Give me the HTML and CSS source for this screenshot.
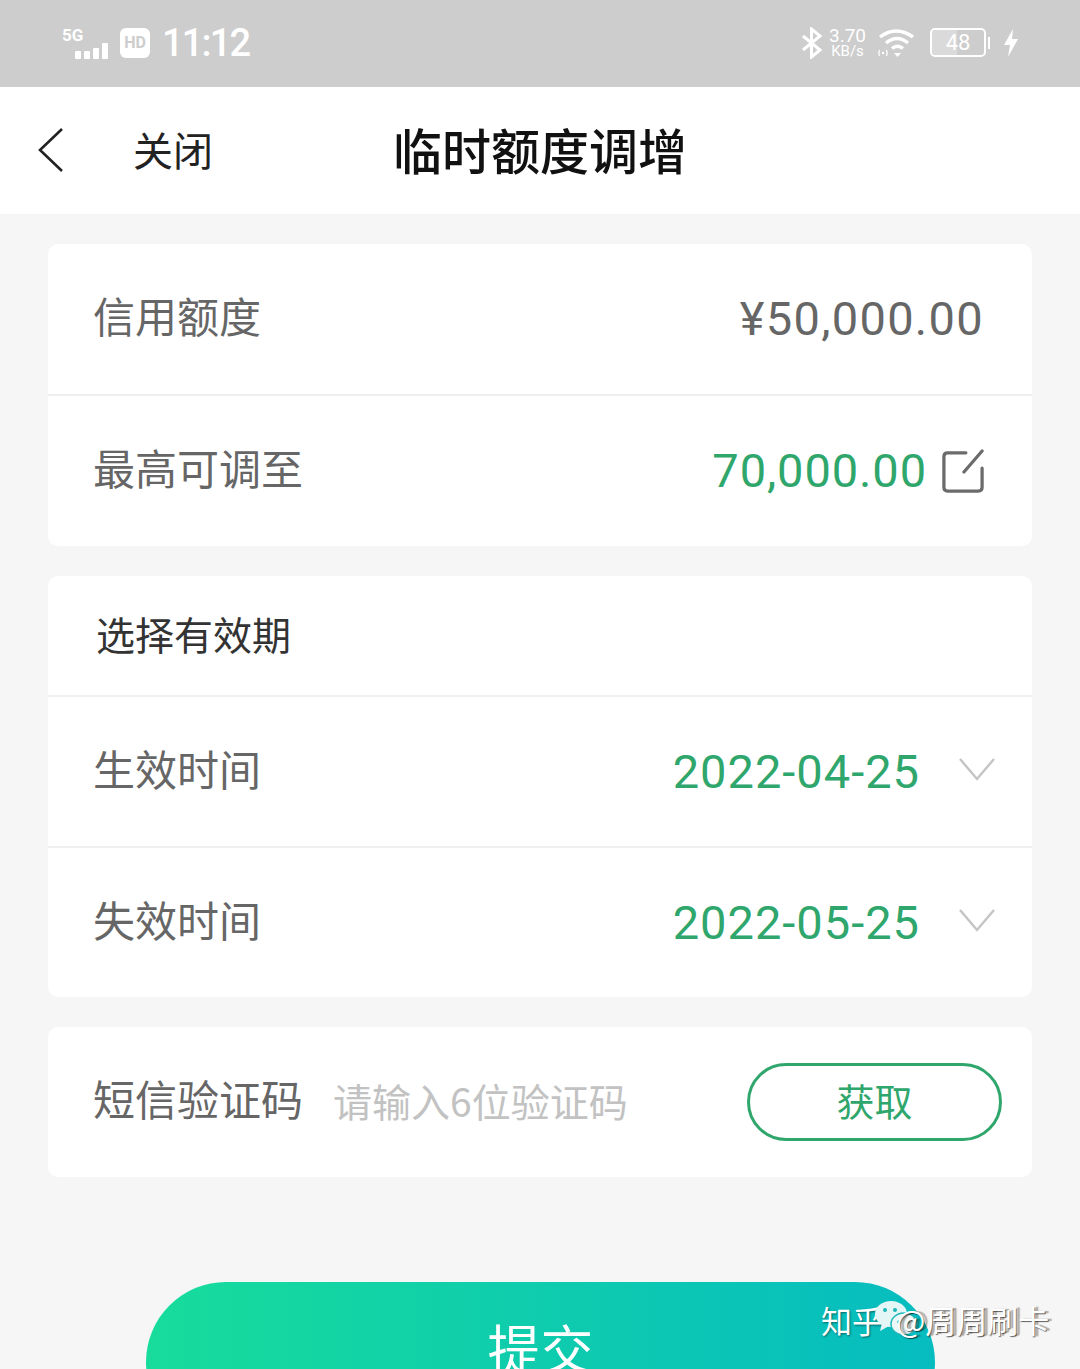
FILE: index.html
```html
<!DOCTYPE html>
<html lang="zh-CN">
<head>
    <meta charset="UTF-8">
    <meta name="viewport" content="width=device-width, initial-scale=1.0">
    <title>临时额度调增</title>
    <link rel="stylesheet" href="styles.css">
</head>
<body>
    <div class="status-bar">
        <div class="status-left">
            <div class="signal">
                <span class="signal-label">5G</span>
                <div class="signal-bars">
                    <i class="bar bar-1"></i><i class="bar bar-1"></i><i class="bar bar-2"></i><i class="bar bar-3"></i>
                </div>
            </div>
            <span class="hd-badge">HD</span>
            <span class="clock">11:12</span>
        </div>
        <div class="status-right">
            <svg class="bt-icon" width="22" height="32" viewBox="0 0 22 32" fill="none" stroke="#fff" stroke-width="3">
                <path d="M2 9 L19 23 L10.500 30 V2 L19 9 L2 23"/>
            </svg>
            <div class="net-speed">
                <span class="speed-num">3.70</span>
                <span class="speed-unit">KB/s</span>
            </div>
            <svg class="wifi-icon" width="38" height="30" viewBox="0 0 38 30" fill="none" stroke="#fff" stroke-width="3.400">
                <path d="M3 9 Q19 -3 36 9"/>
                <path d="M9 15 Q20 6 31 15"/>
                <path d="M15 20.500 Q20.500 16 26 20.500"/>
                <path d="M17 25 H24 L20.500 29 Z" fill="#fff" stroke="none"/>
                <circle cx="6" cy="25" r="1.300" fill="#fff" stroke="none"/>
                <path d="M2.500 22 Q1 25 2.500 28 M9.500 22 Q11 25 9.500 28" stroke-width="1.300"/>
            </svg>
            <div class="battery">
                <div class="battery-body">
                    <div class="battery-level"></div>
                    <span class="battery-num">48</span>
                </div>
                <i class="battery-cap"></i>
            </div>
            <svg class="bolt-icon" width="14" height="28" viewBox="0 0 14 28" fill="#fff">
                <path d="M9 0 L0 16 H6 L4 28 L14 10 H8 Z"/>
            </svg>
        </div>
    </div>

    <div class="nav-bar">
        <svg class="back-icon" width="26" height="46" viewBox="0 0 26 46" fill="none" stroke="#222" stroke-width="2.600">
            <path d="M24 2 L2 23 L24 44"/>
        </svg>
        <span class="nav-close">关闭</span>
        <h1 class="nav-title">临时额度调增</h1>
    </div>

    <div class="content">
        <div class="card">
            <div class="row">
                <span class="row-label">信用额度</span>
                <span class="amount amount-grey">¥50,000.00</span>
            </div>
            <div class="row row-tall">
                <span class="row-label">最高可调至</span>
                <div class="row-value">
                    <span class="amount amount-green">70,000.00</span>
                    <svg class="edit-icon" width="42" height="46" viewBox="0 0 44 46" fill="none" stroke="#6b6b6b" stroke-width="3.400" stroke-linecap="round">
                        <path d="M25 4 H6 Q2 4 2 8 V40 Q2 44 6 44 H38 Q42 44 42 40 V20"/>
                        <path d="M42 2 L23 24"/>
                    </svg>
                </div>
            </div>
        </div>

        <div class="card">
            <div class="card-head">选择有效期</div>
            <div class="row">
                <span class="row-label">生效时间</span>
                <div class="row-value">
                    <span class="date">2022-04-25</span>
                    <svg class="chevron" width="36" height="24" viewBox="0 0 36 24" fill="none" stroke="#c4c4c4" stroke-width="2.400">
                        <path d="M1 2 L18 22 L35 2"/>
                    </svg>
                </div>
            </div>
            <div class="row">
                <span class="row-label">失效时间</span>
                <div class="row-value">
                    <span class="date">2022-05-25</span>
                    <svg class="chevron" width="36" height="24" viewBox="0 0 36 24" fill="none" stroke="#c4c4c4" stroke-width="2.400">
                        <path d="M1 2 L18 22 L35 2"/>
                    </svg>
                </div>
            </div>
        </div>

        <div class="card">
            <div class="row row-sms">
                <span class="row-label sms-label">短信验证码</span>
                <span class="sms-input">请输入6位验证码</span>
                <button class="sms-button">获取</button>
            </div>
        </div>

        <button class="submit">提交</button>
    </div>

    <div class="watermark">
        <span>知乎</span>
        <svg class="wechat-icon" width="44" height="40" viewBox="0 0 44 40">
            <ellipse cx="17" cy="15" rx="16" ry="13" fill="#e4f6f5"/>
            <path d="M8 24 L6 32 L15 27 Z" fill="#e4f6f5"/>
            <ellipse cx="30" cy="25" rx="13" ry="11" fill="#ecf8f8" stroke="#1cb6b6" stroke-width="1.500"/>
            <circle cx="11" cy="11" r="2" fill="#1cb6b6"/>
            <circle cx="21" cy="11" r="2" fill="#1cb6b6"/>
            <circle cx="25" cy="23" r="1.800" fill="#1cb6b6"/>
            <circle cx="34" cy="23" r="1.800" fill="#1cb6b6"/>
        </svg>
        <span class="wm-name">@周周刷卡</span>
    </div>
</body>
</html>
```

FILE: styles.css
```css
* {
    box-sizing: border-box;
}
html, body {
    height: 1369px;
    overflow: hidden;
}
body {
    margin: 0;
    position: relative;
    background-color: #f6f6f6;
    font-family: "Noto Sans CJK SC", "Noto Sans", sans-serif;
}

/* status bar */
.status-bar {
    height: 87px;
    background-color: #cdcdcd;
    color: #fff;
    display: flex;
    justify-content: space-between;
    align-items: center;
    padding: 0 62px 2px 62px;
    font-family: Roboto, "Liberation Sans", sans-serif;
}
.status-left, .status-right {
    display: flex;
    align-items: center;
}
.signal {
    width: 48px;
    height: 32px;
    position: relative;
    margin-right: 10px;
}
.signal-label {
    position: absolute;
    left: 0;
    top: -2px;
    font-size: 17px;
    font-weight: 700;
    line-height: 20px;
}
.signal-bars {
    position: absolute;
    left: 13px;
    bottom: 0;
    display: flex;
    align-items: flex-end;
    gap: 3px;
}
.bar {
    width: 6px;
    background-color: #fff;
    border-radius: 1px;
}
.bar-1 { height: 8px; }
.bar-2 { height: 11px; }
.bar-3 { height: 16px; }
.hd-badge {
    width: 30px;
    height: 30px;
    background-color: #fff;
    color: #cdcdcd;
    border-radius: 6px;
    font-size: 16px;
    font-weight: 700;
    line-height: 30px;
    text-align: center;
    margin-right: 12px;
}
.clock {
    font-size: 38px;
    font-weight: 500;
    line-height: 46px;
    letter-spacing: -1.800px;
}
.bt-icon {
    margin-right: 6px;
}
.net-speed {
    display: flex;
    flex-direction: column;
    align-items: center;
    margin-right: 11px;
}
.speed-num {
    font-size: 19px;
    line-height: 17px;
}
.speed-unit {
    font-size: 15px;
    line-height: 15px;
}
.wifi-icon {
    margin-right: 15px;
}
.battery {
    display: flex;
    align-items: center;
    margin-right: 14px;
}
.battery-body {
    width: 56px;
    height: 29px;
    border: 2px solid #fff;
    border-radius: 5px;
    position: relative;
    overflow: hidden;
}
.battery-level {
    width: 48%;
    height: 100%;
    background-color: #dadada;
}
.battery-num {
    position: absolute;
    inset: 0;
    text-align: center;
    font-size: 22px;
    line-height: 25px;
}
.battery-cap {
    width: 2px;
    height: 12px;
    margin-left: 2px;
    background-color: #fff;
}

/* nav */
.nav-bar {
    height: 127px;
    background-color: #fff;
    position: relative;
    display: flex;
    align-items: center;
    padding-left: 38px;
}
.back-icon {
    margin: 0 70px 2px 0;
}
.nav-close {
    font-size: 40px;
    color: #222;
    line-height: 50px;
    margin-bottom: 4px;
    margin-left: -1px;
}
.nav-title {
    position: absolute;
    left: 0;
    right: 0;
    top: 30px;
    margin: 0;
    text-align: center;
    font-size: 49px;
    font-weight: 500;
    line-height: 64px;
    color: #111;
}

/* cards */
.content {
    padding: 30px 48px 0;
    display: flex;
    flex-direction: column;
    gap: 30px;
}
.card {
    background-color: #fff;
    border-radius: 10px;
}
.row {
    height: 151px;
    padding: 0 48px 0 45px;
    display: flex;
    justify-content: space-between;
    align-items: center;
    border-top: 2px solid #efefef;
}
.row:first-child {
    height: 150px;
    border-top: none;
}
.row.row-tall {
    height: 152px;
}
.row-label {
    font-size: 42px;
    color: #666;
    line-height: 56px;
    margin-bottom: 8px;
}
.row-value {
    display: flex;
    align-items: center;
}
.amount {
    font-family: Roboto, "Liberation Sans", sans-serif;
    font-size: 47px;
    line-height: 56px;
    letter-spacing: 1.300px;
}
.amount-grey {
    color: #666;
}
.amount-green {
    color: #2fa66c;
    margin-right: 15px;
    letter-spacing: 0.900px;
}
.card-head {
    height: 119px;
    padding: 0 0 5px 48px;
    display: flex;
    align-items: center;
    font-size: 39px;
    color: #333;
}
.date {
    font-family: Roboto, "Liberation Sans", sans-serif;
    font-size: 47px;
    line-height: 56px;
    letter-spacing: 1px;
    color: #2fa66c;
    margin-right: 39px;
}
.chevron {
    margin-right: -11px;
    margin-bottom: 6px;
}
.row-sms {
    padding: 0 30px 0 45px;
    justify-content: flex-start;
}
.sms-label {
    margin-right: 30px;
}
.sms-input {
    font-size: 39px;
    line-height: 54px;
    color: #c2c2c2;
    flex: 1;
    margin-bottom: 5px;
}
.sms-button {
    width: 255px;
    height: 78px;
    background-color: #fff;
    border: 3px solid #2fa66c;
    border-radius: 39px;
    color: #2fa66c;
    font-family: inherit;
    font-size: 38px;
    line-height: 50px;
    padding: 0 0 5px;
}

/* submit */
.submit {
    align-self: center;
    width: 789px;
    height: 160px;
    margin-top: 75px;
    margin-left: 1px;
    border: none;
    border-radius: 80px;
    background: linear-gradient(to right, #17dc9b, #06bcc0);
    color: #fff;
    font-family: inherit;
    font-size: 53px;
    padding: 0 0 30px;
    flex-shrink: 0;
}

/* watermark over the page */
.watermark {
    position: absolute;
    left: 821px;
    top: 1298px;
    display: flex;
    align-items: center;
    font-size: 31px;
    line-height: 44px;
    color: #fff;
    text-shadow: 1px 1px 2px rgba(0, 0, 0, 0.45);
    white-space: nowrap;
}
.wechat-icon {
    margin: -2px -22px 0 -9px;
}
.wm-name {
    position: relative;
    text-shadow: 1px 1px 1px rgba(0, 0, 0, 0.6), 4px 0 1px rgba(0, 0, 0, 0.3);
}
```
